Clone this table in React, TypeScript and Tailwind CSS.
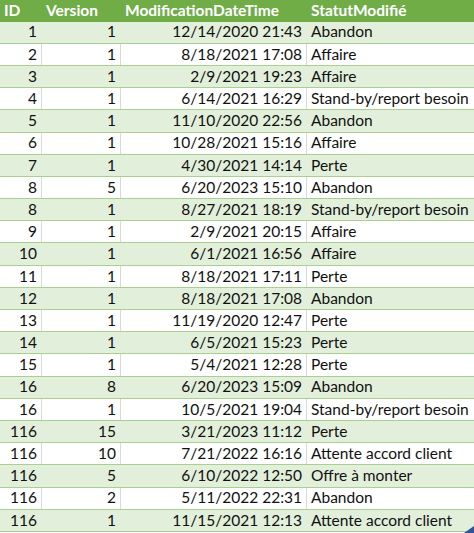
import React from 'react';

type Row = [string, string, string, string];

const rows: Row[] = [
  ['1', '1', '12/14/2020 21:43', 'Abandon'],
  ['2', '1', '8/18/2021 17:08', 'Affaire'],
  ['3', '1', '2/9/2021 19:23', 'Affaire'],
  ['4', '1', '6/14/2021 16:29', 'Stand-by/report besoin'],
  ['5', '1', '11/10/2020 22:56', 'Abandon'],
  ['6', '1', '10/28/2021 15:16', 'Affaire'],
  ['7', '1', '4/30/2021 14:14', 'Perte'],
  ['8', '5', '6/20/2023 15:10', 'Abandon'],
  ['8', '1', '8/27/2021 18:19', 'Stand-by/report besoin'],
  ['9', '1', '2/9/2021 20:15', 'Affaire'],
  ['10', '1', '6/1/2021 16:56', 'Affaire'],
  ['11', '1', '8/18/2021 17:11', 'Perte'],
  ['12', '1', '8/18/2021 17:08', 'Abandon'],
  ['13', '1', '11/19/2020 12:47', 'Perte'],
  ['14', '1', '6/5/2021 15:23', 'Perte'],
  ['15', '1', '5/4/2021 12:28', 'Perte'],
  ['16', '8', '6/20/2023 15:09', 'Abandon'],
  ['16', '1', '10/5/2021 19:04', 'Stand-by/report besoin'],
  ['116', '15', '3/21/2023 11:12', 'Perte'],
  ['116', '10', '7/21/2022 16:16', 'Attente accord client'],
  ['116', '5', '6/10/2022 12:50', 'Offre à monter'],
  ['116', '2', '5/11/2022 22:31', 'Abandon'],
  ['116', '1', '11/15/2021 12:13', 'Attente accord client'],
];

const cols = 'grid grid-cols-[42px_79px_186px_1fr]';

export default function App() {
  return (
    <div className="relative w-[474px] h-[533px] overflow-hidden bg-white font-['Lato','Liberation_Sans',sans-serif] text-[15.5px] text-[#111]">
      {/* header */}
      <div className={`${cols} h-[21.6px] items-end pb-[3px] bg-[#70ad47] font-bold text-white leading-none`}>
        <div className="pl-1">ID</div>
        <div className="pl-1">Version</div>
        <div className="pl-1 whitespace-nowrap">ModificationDateTime</div>
        <div className="pl-1">StatutModifié</div>
      </div>

      {rows.map((r, i) => {
        const shaded = i % 2 === 0;
        const cell = shaded ? 'border-r border-transparent' : 'border-r border-[#d9d9d9]';
        return (
          <div
            key={i}
            className={`${cols} h-[22.2px] items-center leading-none border-b border-[#a9d08e] ${shaded ? 'bg-[#e2efda]' : 'bg-white'}`}
          >
            <div className={`${cell} h-full flex items-center justify-end pr-1`}>{r[0]}</div>
            <div className={`${cell} h-full flex items-center justify-end pr-1`}>{r[1]}</div>
            <div className={`${cell} h-full flex items-center justify-end pr-1`}>{r[2]}</div>
            <div className="h-full flex items-center pl-1 whitespace-nowrap">{r[3]}</div>
          </div>
        );
      })}

      {/* table resize handle */}
      <svg className="absolute right-0 bottom-0" width="12" height="7" viewBox="0 0 12 7">
        <path d="M2 7 L12 0 L12 7 Z" fill="#2f5597" />
      </svg>
    </div>
  );
}
